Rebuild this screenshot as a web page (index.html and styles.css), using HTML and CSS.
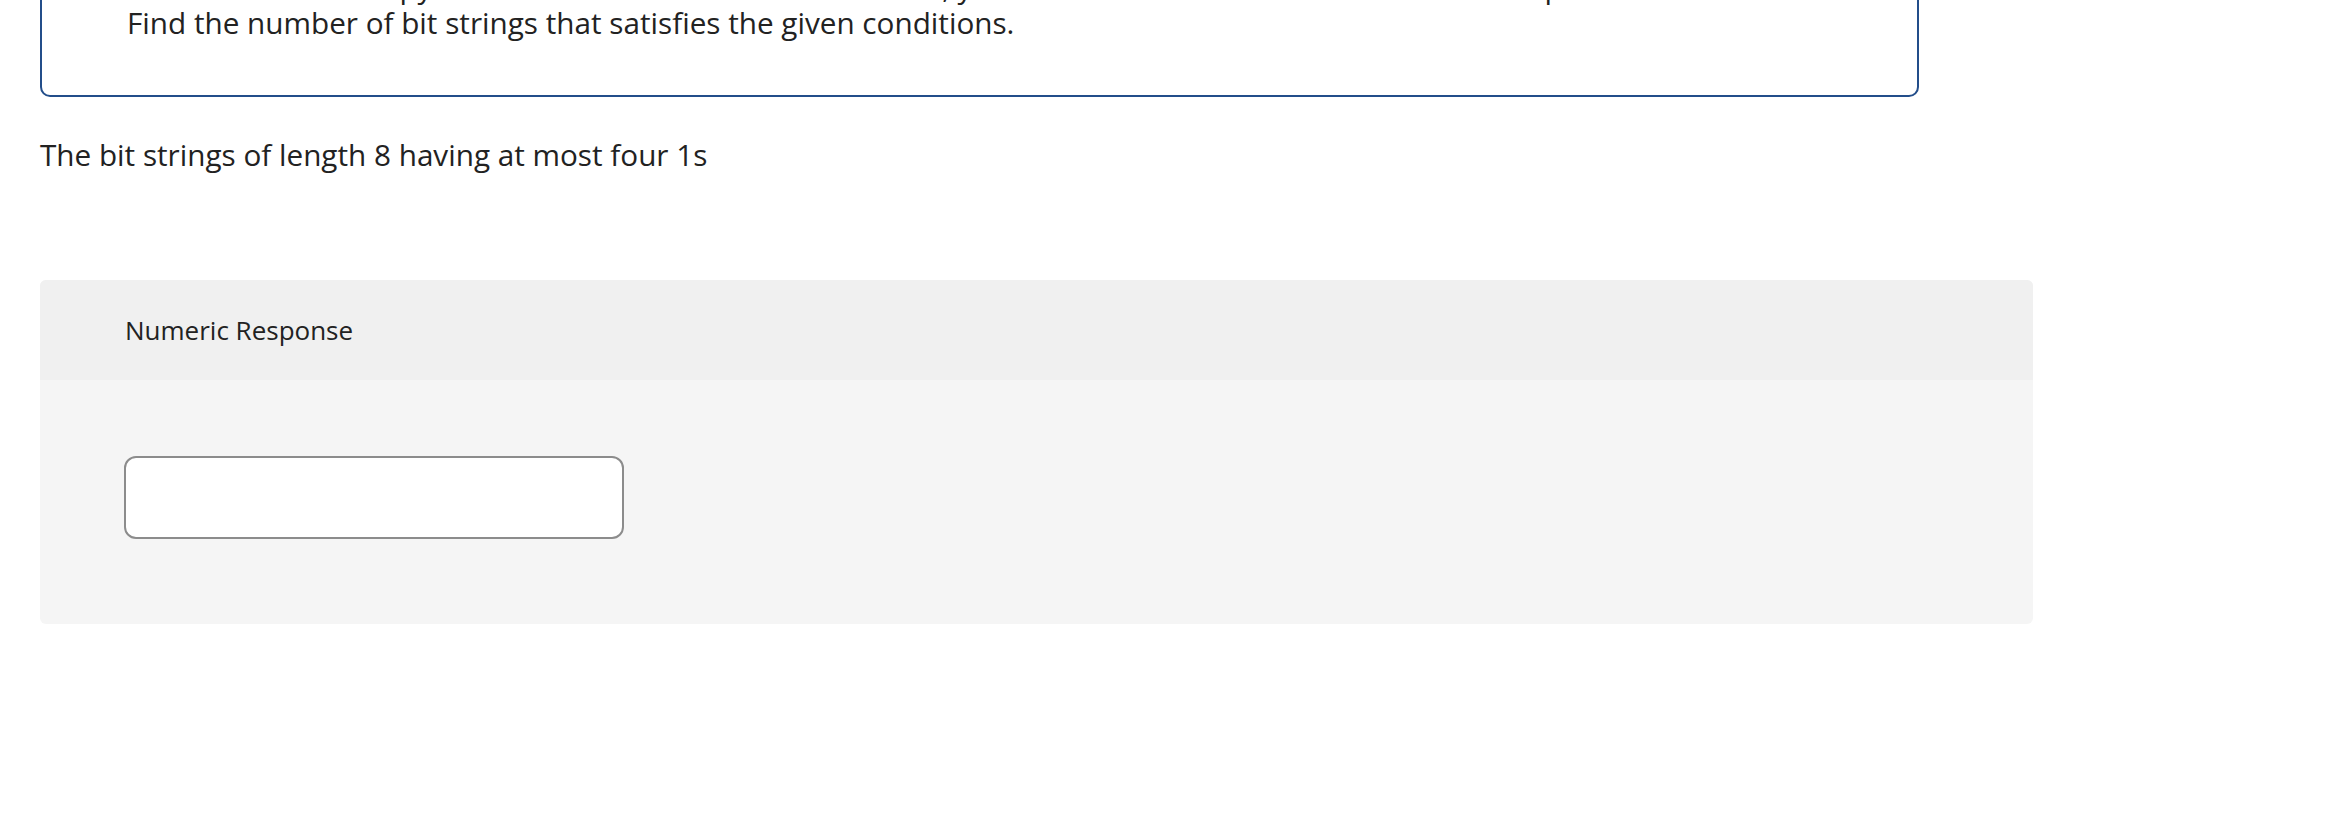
FILE: index.html
```html
<!DOCTYPE html>
<html lang="en">
<head>
    <meta charset="UTF-8">
    <meta name="viewport" content="width=device-width, initial-scale=1.0">
    <title>Question</title>
    <link rel="stylesheet" href="styles.css">
</head>
<body>
    <div class="page">
        <div class="stem">
            <p>Each bit in a new copy of the stored data is either a 0 or a 1, you will then be asked to count each example.<br>Find the number of bit strings that satisfies the given conditions.</p>
        </div>

        <p class="prompt">The bit strings of length 8 having at most four 1s</p>

        <div class="response">
            <div class="response-header">Numeric Response</div>
            <div class="response-body">
                <input class="answer" type="text" aria-label="Numeric Response">
            </div>
        </div>
    </div>
</body>
</html>
```

FILE: styles.css
```css
body {
    font-family: "Open Sans", Lato, sans-serif;
    color: #222;
    background-color: #fff;
    margin: 0;
    padding: 0;
    overflow: hidden;
}
.page {
    padding: 0 303px 0 40px;
}
.stem {
    margin-top: -53px;
    margin-right: 114px;
    padding: 20px 85px 54px;
    border: 2px solid #234e8a;
    border-radius: 10px;
}
.stem p {
    margin: 0;
    font-size: 29.7px;
    line-height: 36px;
    white-space: nowrap;
}
.prompt {
    margin: 40px 0 107px;
    font-size: 29.7px;
    line-height: 36px;
}
.response {
    border-radius: 6px;
    overflow: hidden;
    background-color: #f5f5f5;
}
.response-header {
    height: 100px;
    display: flex;
    align-items: center;
    padding-left: 85px;
    background-color: #f0f0f0;
    font-size: 26px;
}
.response-body {
    padding: 76px 84px 85px;
}
.answer {
    display: block;
    box-sizing: border-box;
    width: 500px;
    height: 83px;
    border: 2px solid #8c8c8c;
    border-radius: 12px;
    background-color: #fff;
    font-family: inherit;
    font-size: 26px;
    padding: 0 16px;
    outline: none;
}
```
